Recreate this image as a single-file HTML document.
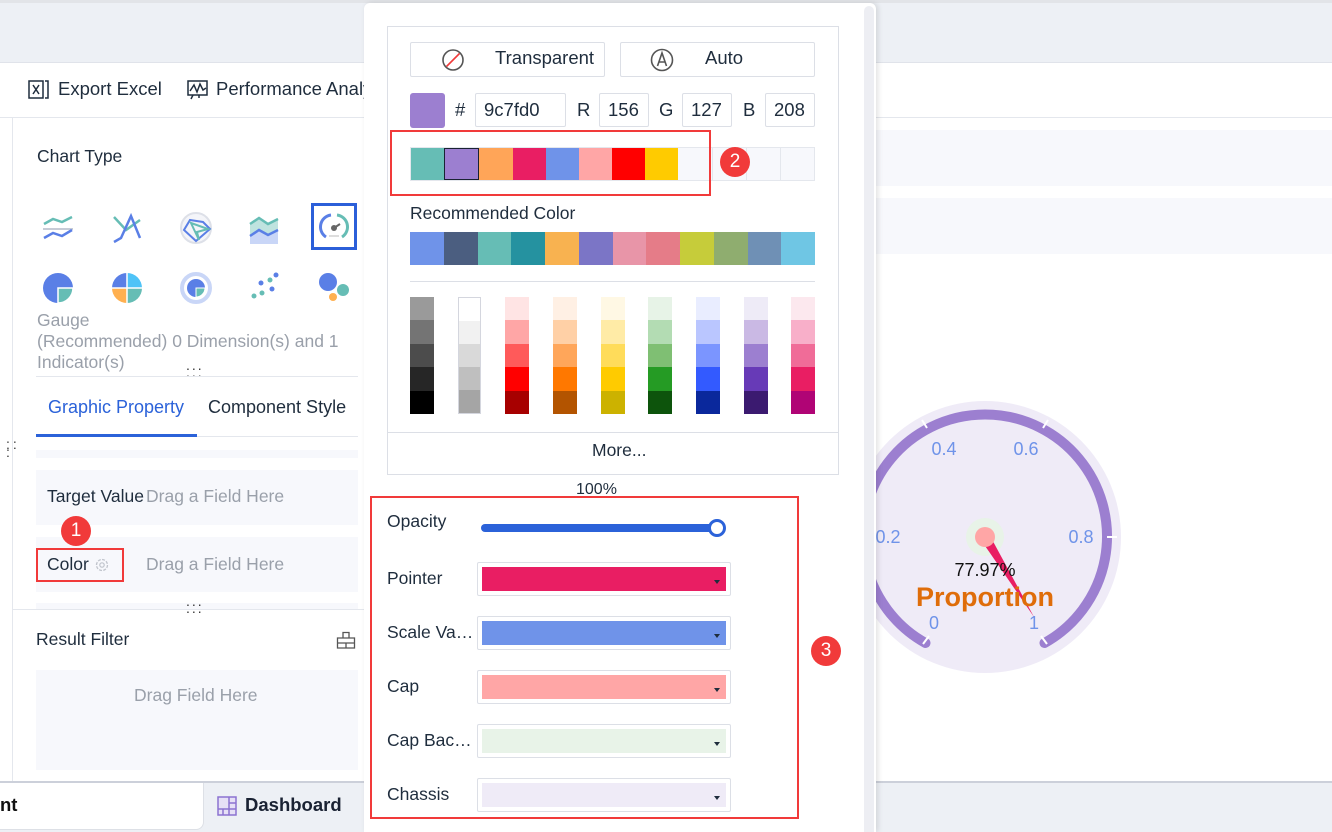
<!DOCTYPE html>
<html><head><meta charset="utf-8">
<style>
*{margin:0;padding:0;box-sizing:border-box}
body{width:1332px;height:832px;overflow:hidden;position:relative;background:#fff;font-family:"Liberation Sans",sans-serif;color:#1f2d3d;font-size:17.5px}
.a{position:absolute}
.t{position:absolute;white-space:nowrap;line-height:1}
.badge{position:absolute;width:30px;height:30px;border-radius:50%;background:#f13a3a;color:#fff;font-size:19px;text-align:center;line-height:30px}
.inp{position:absolute;border:1px solid #dcdfe6;border-radius:2px;height:34px;font-size:18.5px;line-height:32px;padding-left:8px;color:#1f2d3d}
.sel{position:absolute;left:477px;width:254px;height:34px;border:1px solid #dcdfe6;border-radius:2px;padding:4px}
.sel div{width:100%;height:100%;position:relative}
.sel div:after{content:"";position:absolute;right:6px;bottom:4px;border:3px solid transparent;border-top:4px solid #1f2d3d}
</style></head><body>
<div class="a" style="left:0;top:0;width:1332px;height:3px;background:#e2e4e8"></div>
<div class="a" style="left:0;top:3px;width:1332px;height:60px;background:#edf0f5;border-bottom:1px solid #e0e3ea"></div>
<div class="a" style="left:0;top:117px;width:1332px;height:1px;background:#e4e7ed"></div>
<svg class="a" style="left:28px;top:80px" width="22" height="20" viewBox="0 0 22 20"><rect x="1" y="1" width="14" height="17" fill="none" stroke="#1f2d3d" stroke-width="1.5"/><path d="M5 5l6 9M11 5l-6 9M17 1h3v17h-3" fill="none" stroke="#1f2d3d" stroke-width="1.5"/></svg>
<div class="t" style="left:58px;top:80px;font-size:18.5px">Export Excel</div>
<svg class="a" style="left:187px;top:80px" width="22" height="20" viewBox="0 0 22 20"><rect x="1" y="1" width="19" height="14" fill="none" stroke="#1f2d3d" stroke-width="1.5"/><path d="M3 11l4-6 3 7 3-8 3 6 3-2M6 15l-2 4M12 15v3" fill="none" stroke="#1f2d3d" stroke-width="1.5"/></svg>
<div class="t" style="left:216px;top:80px;font-size:18.5px">Performance Analysis</div>
<div class="a" style="left:12px;top:118px;width:1px;height:664px;background:#e4e7ed"></div>
<div class="t" style="left:37px;top:148px">Chart Type</div>
<svg class="a" style="left:40px;top:210px" width="36" height="36" viewBox="0 0 36 36"><path d="M4 14l9-5 9 3 10-5" fill="none" stroke="#66bdb5" stroke-width="2.5"/><path d="M3 19h30" stroke="#c6cbd6" stroke-width="2"/><path d="M4 28l9-5 9 3 10-6" fill="none" stroke="#5a7fe6" stroke-width="2.5"/></svg>
<svg class="a" style="left:109px;top:210px" width="36" height="36" viewBox="0 0 36 36"><path d="M5 7l12 13 14-10" fill="none" stroke="#66bdb5" stroke-width="2.5"/><path d="M5 32l7-4 10-22 9 22" fill="none" stroke="#5a7fe6" stroke-width="2.5"/></svg>
<svg class="a" style="left:178px;top:210px" width="36" height="36" viewBox="0 0 36 36"><circle cx="18" cy="18" r="15" fill="#f4f5f9" stroke="#dde0e8" stroke-width="2"/><path d="M12 10l13 2 7 7-14 12-12-11z" fill="none" stroke="#5a7fe6" stroke-width="2"/><path d="M13 13l17 6-11 3 2 8z" fill="none" stroke="#66bdb5" stroke-width="2"/></svg>
<svg class="a" style="left:246px;top:210px" width="36" height="36" viewBox="0 0 36 36"><path d="M4 14l9-6 9 6 10-5v12l-10 5-9-6-9 6z" fill="#bfe3df"/><path d="M4 14l9-6 9 6 10-5" fill="none" stroke="#66bdb5" stroke-width="2.5"/><path d="M4 26l9-6 9 5 10-5v14H4z" fill="#c9d6f7"/><path d="M4 26l9-6 9 5 10-5" fill="none" stroke="#5a7fe6" stroke-width="2.5"/></svg>
<div class="a" style="left:311px;top:203px;width:46px;height:47px;border:3px solid #2b5fd9"></div>
<svg class="a" style="left:316px;top:209px" width="36" height="36" viewBox="0 0 36 36"><path d="M10 28A12 12 0 0 1 15 6" fill="none" stroke="#5a7fe6" stroke-width="3"/><path d="M21 6A12 12 0 0 1 26 28" fill="none" stroke="#66bdb5" stroke-width="3"/><circle cx="18" cy="19" r="3" fill="#666"/><path d="M18 19l6-4" stroke="#666" stroke-width="2"/><path d="M13 27h10" stroke="#ddd" stroke-width="2"/></svg>
<svg class="a" style="left:40px;top:270px" width="36" height="36" viewBox="0 0 36 36"><circle cx="18" cy="18" r="15" fill="#5a7fe6"/><path d="M18 18h15a15 15 0 0 1-15 15z" fill="#66bdb5" stroke="#fff" stroke-width="1.5"/></svg>
<svg class="a" style="left:109px;top:270px" width="36" height="36" viewBox="0 0 36 36"><path d="M18 18V3a15 15 0 0 0-15 15z" fill="#5a7fe6"/><path d="M18 18V3a15 15 0 0 1 15 15z" fill="#4fc3f7"/><path d="M18 18H3a15 15 0 0 0 15 15z" fill="#ffb050"/><path d="M18 18h15a15 15 0 0 1-15 15z" fill="#66bdb5"/><path d="M18 3v30M3 18h30" stroke="#fff" stroke-width="1.5"/></svg>
<svg class="a" style="left:178px;top:270px" width="36" height="36" viewBox="0 0 36 36"><circle cx="18" cy="18" r="14" fill="none" stroke="#c9d6f7" stroke-width="4"/><circle cx="18" cy="18" r="9" fill="#5a7fe6"/><path d="M18 18h9a9 9 0 0 1-9 9z" fill="#66bdb5" stroke="#fff"/></svg>
<svg class="a" style="left:246px;top:270px" width="36" height="36" viewBox="0 0 36 36"><circle cx="30" cy="5" r="2.5" fill="#5a7fe6"/><circle cx="24" cy="10" r="2.5" fill="#66bdb5"/><circle cx="15" cy="13" r="2.5" fill="#5a7fe6"/><circle cx="26" cy="19" r="2.5" fill="#5a7fe6"/><circle cx="16" cy="23" r="2.5" fill="#66bdb5"/><circle cx="8" cy="26" r="2.5" fill="#66bdb5"/></svg>
<svg class="a" style="left:315px;top:270px" width="36" height="36" viewBox="0 0 36 36"><circle cx="13" cy="12" r="9" fill="#5a7fe6"/><circle cx="28" cy="20" r="6" fill="#66bdb5"/><circle cx="18" cy="27" r="4" fill="#ffb050"/></svg>
<div class="t" style="left:37px;top:310px;color:#9aa0aa;line-height:21px;white-space:normal;width:325px">Gauge<br>(Recommended) 0 Dimension(s) and 1<br>Indicator(s)</div>
<div class="t" style="left:186px;top:362px;font-size:14px;color:#333;letter-spacing:2px;line-height:7px">...<br>...</div>
<div class="a" style="left:36px;top:376px;width:322px;height:1px;background:#e4e7ed"></div>
<div class="t" style="left:48px;top:398px;font-size:18px;color:#2b62d9">Graphic Property</div>
<div class="t" style="left:208px;top:398px;font-size:18px">Component Style</div>
<div class="a" style="left:36px;top:436px;width:322px;height:1px;background:#e4e7ed"></div>
<div class="a" style="left:36px;top:434px;width:161px;height:3px;background:#2b62d9"></div>
<div class="t" style="left:6px;top:440px;font-size:14px;color:#333;letter-spacing:3px;line-height:8px">::<br>:</div>
<div class="a" style="left:36px;top:450px;width:322px;height:8px;background:#f7f8fc"></div>
<div class="a" style="left:36px;top:470px;width:322px;height:55px;background:#f7f8fc"></div>
<div class="t" style="left:47px;top:488px">Target Value</div>
<div class="t" style="left:146px;top:488px;color:#9aa0aa">Drag a Field Here</div>
<div class="a" style="left:36px;top:537px;width:322px;height:55px;background:#f7f8fc"></div>
<div class="a" style="left:36px;top:548px;width:88px;height:34px;border:2px solid #f13a3a"></div>
<div class="t" style="left:47px;top:556px">Color</div>
<svg class="a" style="left:94px;top:557px" width="16" height="16" viewBox="0 0 16 16"><circle cx="8" cy="8" r="5.5" fill="none" stroke="#c0c4cc" stroke-width="1.3" stroke-dasharray="3 1.3"/><circle cx="8" cy="8" r="2.2" fill="none" stroke="#c0c4cc" stroke-width="1.2"/></svg>
<div class="t" style="left:146px;top:556px;color:#9aa0aa">Drag a Field Here</div>
<div class="badge" style="left:61px;top:516px">1</div>
<div class="a" style="left:36px;top:603px;width:322px;height:6px;background:#f7f8fc"></div>
<div class="t" style="left:186px;top:598px;font-size:14px;color:#333;letter-spacing:2px;line-height:7px">...<br>...</div>
<div class="a" style="left:12px;top:609px;width:352px;height:1px;background:#e4e7ed"></div>
<div class="t" style="left:36px;top:631px">Result Filter</div>
<svg class="a" style="left:336px;top:630px" width="20" height="20" viewBox="0 0 20 20"><path d="M1.5 8h17v10h-17zM7 8V2.5h6V8M1.5 13h17M10 13v5" fill="none" stroke="#555" stroke-width="1.3"/></svg>
<div class="a" style="left:36px;top:670px;width:322px;height:100px;background:#f7f8fc"></div>
<div class="t" style="left:134px;top:687px;color:#9aa0aa">Drag Field Here</div>
<div class="a" style="left:0;top:781px;width:1332px;height:51px;background:#edf0f5;border-top:2px solid #ccd0da"></div>
<div class="a" style="left:0;top:783px;width:204px;height:47px;background:#fff;border-radius:0 0 8px 0;border-right:1px solid #dde0e6;border-bottom:1px solid #dde0e6"></div>
<div class="t" style="left:0;top:796px;font-size:18.5px;font-weight:bold;color:#111">nt</div>
<svg class="a" style="left:217px;top:796px" width="20" height="20" viewBox="0 0 20 20"><rect x="1" y="1" width="18" height="18" fill="#e6e0f6" stroke="#8c72d1" stroke-width="1.5"/><path d="M12 1v18M12 7h7M12 13h7M1 13h11M6 13v6" stroke="#8c72d1" stroke-width="1.5"/></svg>
<div class="t" style="left:245px;top:796px;font-size:18.5px;font-weight:bold;color:#1a2233">Dashboard</div>
<div class="a" style="left:876px;top:130px;width:456px;height:56px;background:#f7f8fc"></div>
<div class="a" style="left:876px;top:198px;width:456px;height:56px;background:#f7f8fc"></div>
<svg class="a" style="left:0;top:0" width="1332" height="832" viewBox="0 0 1332 832">
<circle cx="985" cy="537" r="136" fill="#efebf7"/>
<path d="M925.5 643 A122 122 0 1 1 1044.5 643" fill="none" stroke="#9c7fd0" stroke-width="10" stroke-linecap="round"/>
<g stroke="#fff" stroke-width="2">
<path d="M929 636l-6 8"/><path d="M1041 636l6 8"/><path d="M1107 537h10"/><path d="M1043 428l5-8"/><path d="M927 428l-5-8"/>
</g>
<g font-family="Liberation Sans,sans-serif" font-size="18" fill="#6f93e9" text-anchor="middle">
<text x="944" y="455">0.4</text><text x="1026" y="455">0.6</text><text x="888" y="543">0.2</text><text x="1081" y="543">0.8</text><text x="934" y="629">0</text><text x="1034" y="629">1</text>
</g>
<circle cx="985" cy="537" r="19" fill="#e8f3e8"/>
<path d="M981 540 L1034 617 L989 534 z" fill="#e91e63"/>
<circle cx="985" cy="537" r="10" fill="#ffa6a6"/>
<text x="985" y="576" font-family="Liberation Sans,sans-serif" font-size="18" text-anchor="middle" fill="#111">77.97%</text>
<text x="985" y="606" font-family="Liberation Sans,sans-serif" font-size="27" font-weight="bold" text-anchor="middle" fill="#df6d0a">Proportion</text>
</svg>
<div class="a" style="left:364px;top:3px;width:512px;height:829px;background:#fff;border-radius:6px 6px 0 0;box-shadow:2px 0 6px rgba(0,0,0,.12)"></div>
<div class="a" style="left:864px;top:6px;width:10px;height:826px;background:#edeef3;border-radius:5px 5px 0 0"></div>
<div class="a" style="left:387px;top:26px;width:452px;height:449px;border:1px solid #dcdfe6"></div>
<div class="a" style="left:410px;top:42px;width:195px;height:35px;border:1px solid #dcdfe6;border-radius:2px"></div>
<svg class="a" style="left:441px;top:48px" width="24" height="24" viewBox="0 0 24 24"><circle cx="12" cy="12" r="10" fill="none" stroke="#555" stroke-width="1.6"/><path d="M5.5 18.5l13-13" stroke="#f13a3a" stroke-width="1.6"/></svg>
<div class="t" style="left:495px;top:49px;font-size:18.5px">Transparent</div>
<div class="a" style="left:620px;top:42px;width:195px;height:35px;border:1px solid #dcdfe6;border-radius:2px"></div>
<svg class="a" style="left:650px;top:48px" width="24" height="24" viewBox="0 0 24 24"><circle cx="12" cy="12" r="10.5" fill="none" stroke="#555" stroke-width="1.6"/><path d="M7.5 18L12 5l4.5 13M9 14h6" fill="none" stroke="#555" stroke-width="1.6"/></svg>
<div class="t" style="left:705px;top:49px;font-size:18.5px">Auto</div>
<div class="a" style="left:410px;top:93px;width:35px;height:35px;background:#9c7fd0;border-radius:3px"></div>
<div class="t" style="left:455px;top:101px;font-size:18.5px">#</div>
<div class="inp" style="left:475px;top:93px;width:91px">9c7fd0</div>
<div class="t" style="left:577px;top:101px;font-size:18.5px">R</div>
<div class="inp" style="left:599px;top:93px;width:50px">156</div>
<div class="t" style="left:659px;top:101px;font-size:18.5px">G</div>
<div class="inp" style="left:682px;top:93px;width:50px">127</div>
<div class="t" style="left:743px;top:101px;font-size:18.5px">B</div>
<div class="inp" style="left:765px;top:93px;width:50px">208</div>
<div class="a" style="left:410px;top:147px;width:405px;height:34px;display:flex;border:1px solid #e4e7ed">
<div style="flex:1;background:#66bdb5"></div><div style="flex:1;background:#9c7fd0;border:1px solid #1a2233"></div><div style="flex:1;background:#ffa558"></div><div style="flex:1;background:#e91e63"></div><div style="flex:1;background:#6f93e9"></div><div style="flex:1;background:#ffa6a6"></div><div style="flex:1;background:#ff0000"></div><div style="flex:1;background:#ffcb00"></div><div style="flex:1;background:#f7f8fc;border-right:1px solid #e4e7ed"></div><div style="flex:1;background:#f7f8fc;border-right:1px solid #e4e7ed"></div><div style="flex:1;background:#f7f8fc;border-right:1px solid #e4e7ed"></div><div style="flex:1;background:#f7f8fc"></div>
</div>
<div class="a" style="left:390px;top:130px;width:321px;height:66px;border:2px solid #f13a3a"></div>
<div class="badge" style="left:720px;top:147px">2</div>
<div class="t" style="left:410px;top:205px">Recommended Color</div>
<div class="a" style="left:410px;top:232px;width:405px;height:33px;display:flex">
<div style="flex:1;background:#6f93e9"></div><div style="flex:1;background:#4b5e80"></div><div style="flex:1;background:#66bdb5"></div><div style="flex:1;background:#2592a0"></div><div style="flex:1;background:#f8b250"></div><div style="flex:1;background:#7b75c6"></div><div style="flex:1;background:#e895a8"></div><div style="flex:1;background:#e57c88"></div><div style="flex:1;background:#c6cc3a"></div><div style="flex:1;background:#8fad6f"></div><div style="flex:1;background:#6f90b5"></div><div style="flex:1;background:#6fc6e4"></div>
</div>
<div class="a" style="left:410px;top:281px;width:405px;height:1px;background:#dcdfe6"></div>
<div class="a" style="left:388px;top:432px;width:450px;height:1px;background:#dcdfe6"></div>
<div class="t" style="left:592px;top:442px">More...</div>
<div class="t" style="left:576px;top:482px;font-size:16px">100%</div>
<div class="a" style="left:370px;top:496px;width:429px;height:323px;border:2px solid #f13a3a"></div>
<div class="badge" style="left:811px;top:636px">3</div>
<div class="t" style="left:387px;top:513px">Opacity</div>
<div class="a" style="left:481px;top:524px;width:240px;height:8px;background:#2b62d9;border-radius:4px"></div>
<div class="a" style="left:708px;top:519px;width:18px;height:18px;border:3px solid #2b62d9;border-radius:50%;background:#fff"></div>
<div class="t" style="left:387px;top:570px">Pointer</div>
<div class="sel" style="top:562px"><div style="background:#e91e63"></div></div>
<div class="t" style="left:387px;top:624px">Scale Va…</div>
<div class="sel" style="top:616px"><div style="background:#6f93e9"></div></div>
<div class="t" style="left:387px;top:678px">Cap</div>
<div class="sel" style="top:670px"><div style="background:#ffa6a6"></div></div>
<div class="t" style="left:387px;top:732px">Cap Bac…</div>
<div class="sel" style="top:724px"><div style="background:#e8f3e8"></div></div>
<div class="t" style="left:387px;top:786px">Chassis</div>
<div class="sel" style="top:778px"><div style="background:#efebf7"></div></div>
<div class="a" style="left:410px;top:297px;width:24px;height:117px;display:flex;flex-direction:column"><div style="flex:1;background:#9a9a9a"></div><div style="flex:1;background:#747474"></div><div style="flex:1;background:#4c4c4c"></div><div style="flex:1;background:#262626"></div><div style="flex:1;background:#000"></div></div>
<div class="a" style="left:458px;top:297px;width:23px;height:117px;display:flex;flex-direction:column;border:1px solid #d4d6de"><div style="flex:1;background:#fff"></div><div style="flex:1;background:#f1f1f1"></div><div style="flex:1;background:#d9d9d9"></div><div style="flex:1;background:#bfbfbf"></div><div style="flex:1;background:#a5a5a5"></div></div>
<div class="a" style="left:505px;top:297px;width:24px;height:117px;display:flex;flex-direction:column"><div style="flex:1;background:#ffe4e4"></div><div style="flex:1;background:#ffa6a6"></div><div style="flex:1;background:#ff5a5a"></div><div style="flex:1;background:#ff0000"></div><div style="flex:1;background:#a70000"></div></div>
<div class="a" style="left:553px;top:297px;width:24px;height:117px;display:flex;flex-direction:column"><div style="flex:1;background:#fff0e4"></div><div style="flex:1;background:#ffd0a6"></div><div style="flex:1;background:#ffa65a"></div><div style="flex:1;background:#ff7800"></div><div style="flex:1;background:#b35400"></div></div>
<div class="a" style="left:601px;top:297px;width:24px;height:117px;display:flex;flex-direction:column"><div style="flex:1;background:#fff8e4"></div><div style="flex:1;background:#ffeba6"></div><div style="flex:1;background:#ffdc5a"></div><div style="flex:1;background:#ffcb00"></div><div style="flex:1;background:#ccb200"></div></div>
<div class="a" style="left:648px;top:297px;width:24px;height:117px;display:flex;flex-direction:column"><div style="flex:1;background:#e7f3e7"></div><div style="flex:1;background:#b3dcb3"></div><div style="flex:1;background:#7fbf73"></div><div style="flex:1;background:#259b24"></div><div style="flex:1;background:#0d540c"></div></div>
<div class="a" style="left:696px;top:297px;width:24px;height:117px;display:flex;flex-direction:column"><div style="flex:1;background:#e9edff"></div><div style="flex:1;background:#bac6ff"></div><div style="flex:1;background:#7b95ff"></div><div style="flex:1;background:#335aff"></div><div style="flex:1;background:#0a289c"></div></div>
<div class="a" style="left:744px;top:297px;width:24px;height:117px;display:flex;flex-direction:column"><div style="flex:1;background:#eeebf7"></div><div style="flex:1;background:#cab9e4"></div><div style="flex:1;background:#9c7fd0"></div><div style="flex:1;background:#673ab7"></div><div style="flex:1;background:#3b1a70"></div></div>
<div class="a" style="left:791px;top:297px;width:24px;height:117px;display:flex;flex-direction:column"><div style="flex:1;background:#fce8ee"></div><div style="flex:1;background:#f8afc9"></div><div style="flex:1;background:#f06c98"></div><div style="flex:1;background:#e91e63"></div><div style="flex:1;background:#b00475"></div></div>
</body></html>
